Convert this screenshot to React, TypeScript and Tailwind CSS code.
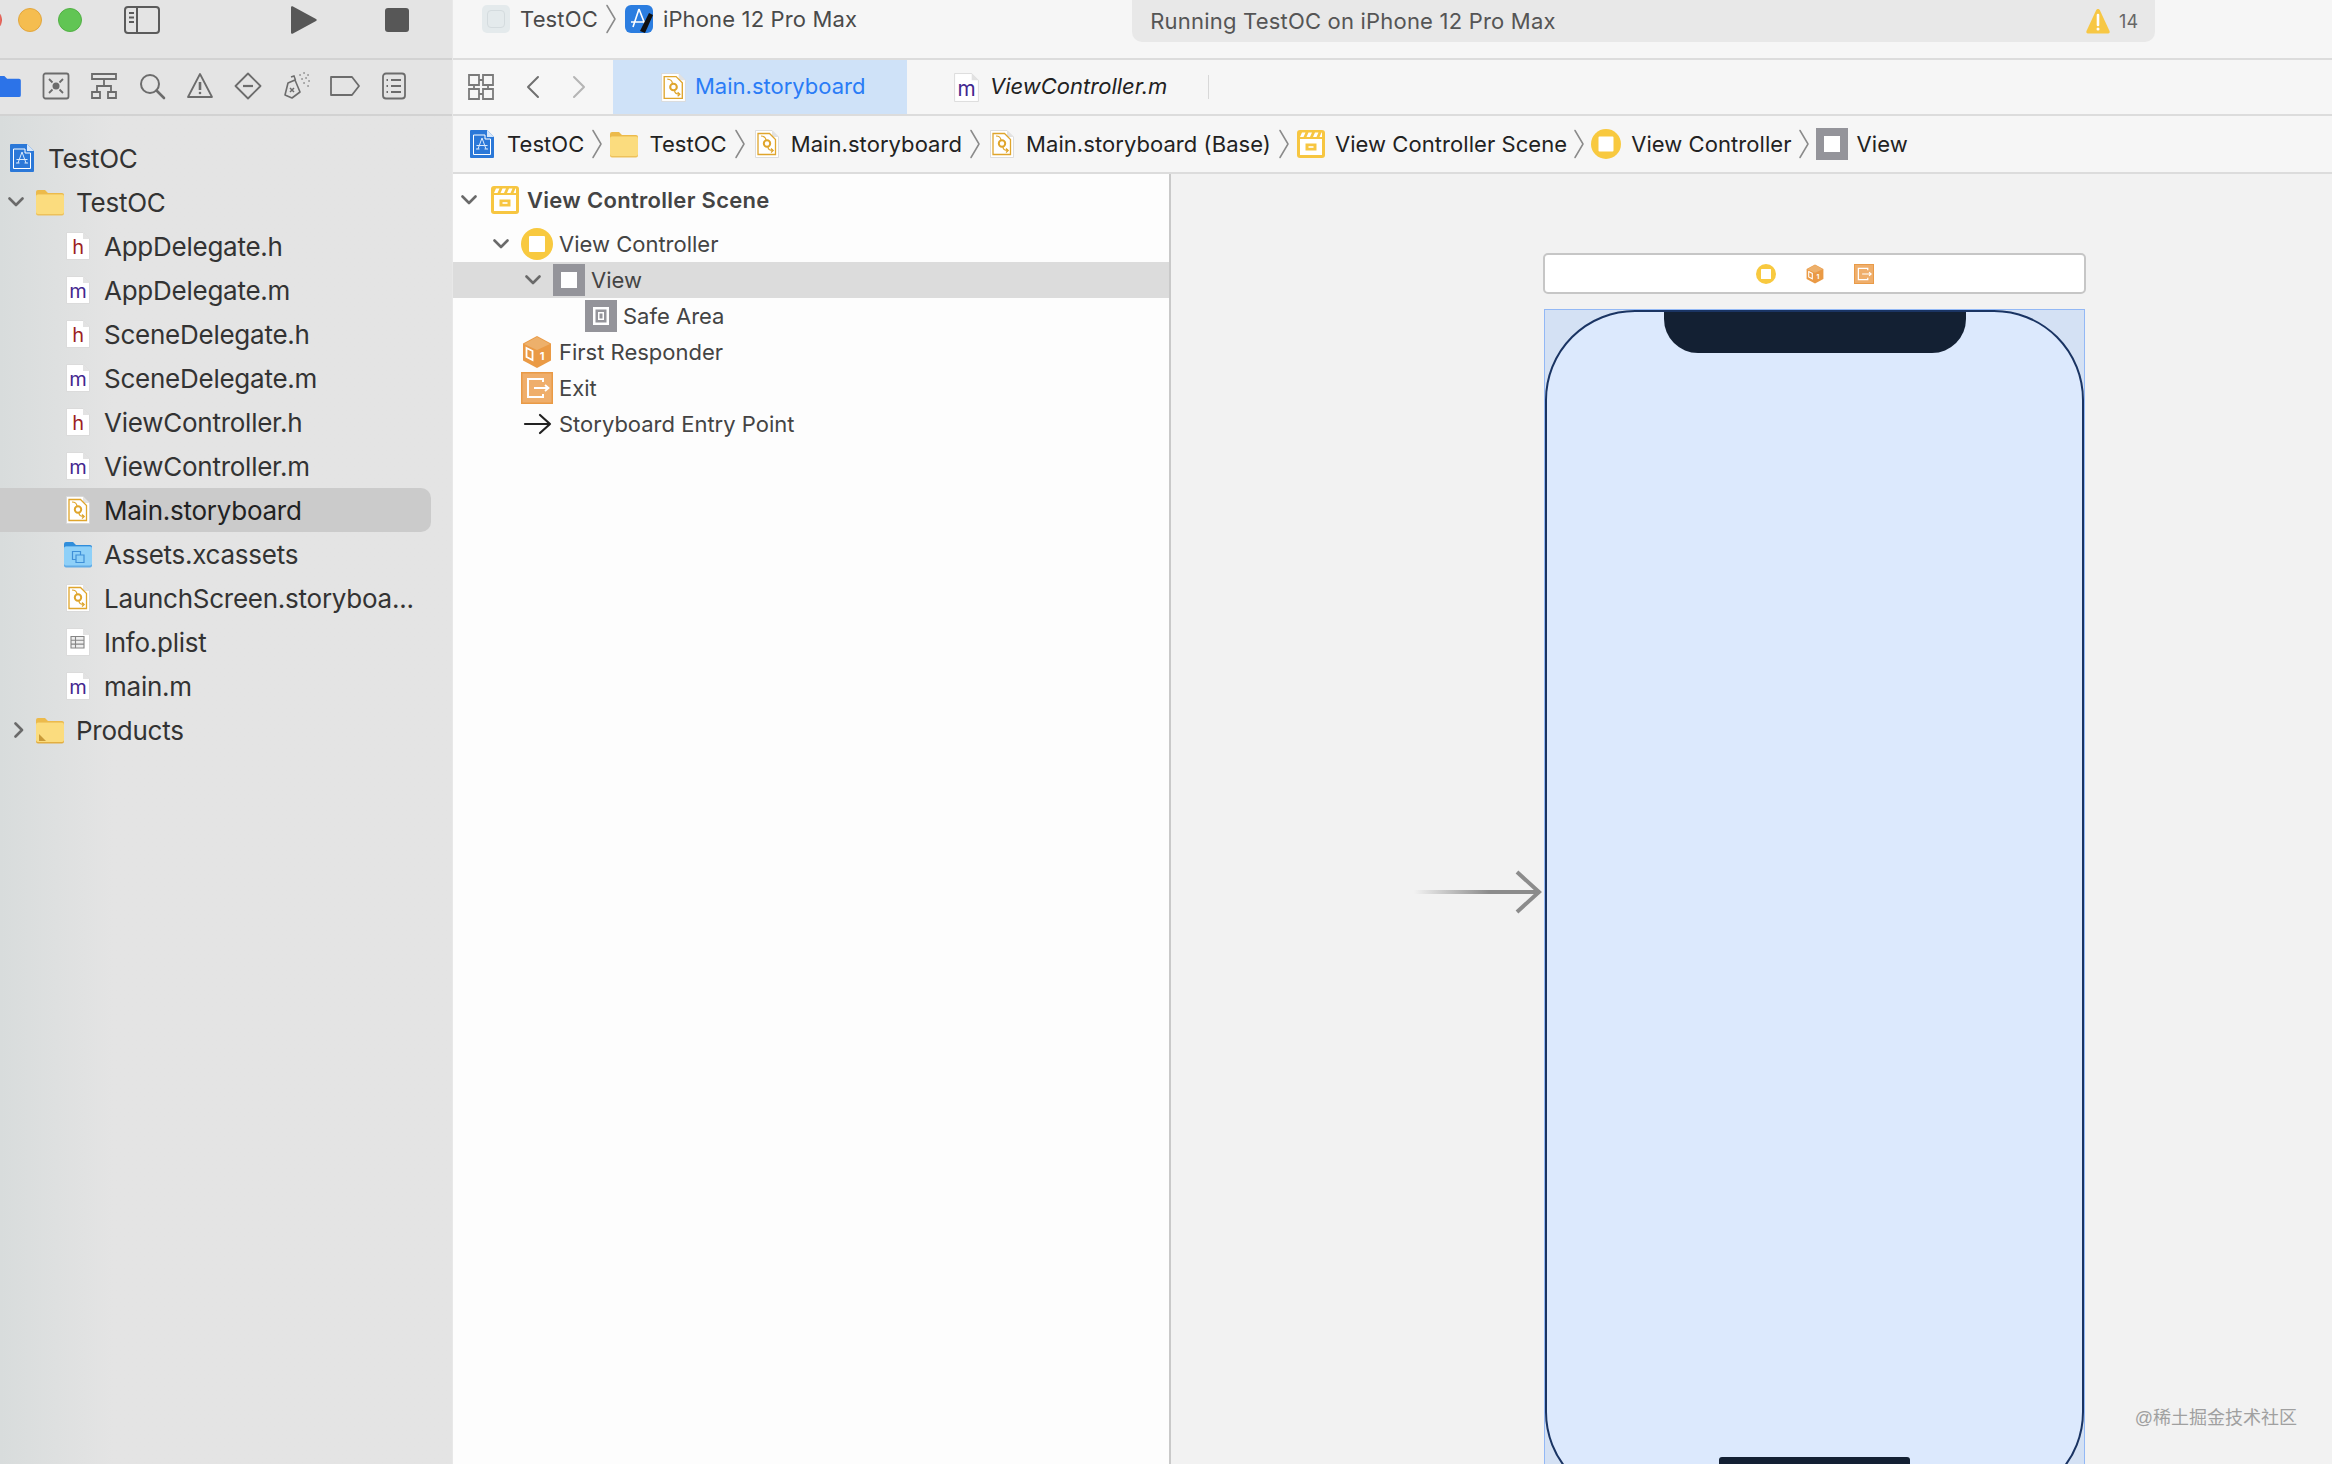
import type { ReactNode } from 'react'

type Cls = { className?: string }

function Chevron({ dir = 'down', className = '' }: { dir?: 'down' | 'right' } & Cls) {
  return (
    <svg viewBox="0 0 16 16" className={className} fill="none" stroke="#6a6a6a" strokeWidth="2.6" strokeLinecap="round" strokeLinejoin="round">
      {dir === 'down' ? <path d="M1.5 4.5 8 11l6.5-6.5" /> : <path d="M4.5 1.5 11 8l-6.5 6.5" />}
    </svg>
  )
}

function PathSep() {
  return (
    <svg viewBox="0 0 10 30" className="h-[30px] w-[10px] shrink-0" fill="none" stroke="#8a8a8a" strokeWidth="1.5" strokeLinecap="round" strokeLinejoin="round">
      <path d="M1 1.5 9 15 1 28.5" />
    </svg>
  )
}

function Page({ className = '', children }: Cls & { children?: ReactNode }) {
  return (
    <svg viewBox="0 0 24 28" className={className}>
      <path d="M.5.5H17L23.5 7v20.500H.5Z" fill="#fff" stroke="#d6d6d6" strokeWidth=".8" />
      <path d="M17 .5V7h6.500Z" fill="#e2e2e2" />
      {children}
    </svg>
  )
}

function CodeFile({ letter, className = 'h-[28px] w-[24px]' }: { letter: 'h' | 'm' } & Cls) {
  return (
    <Page className={className}>
      <text x="12" y="22" textAnchor="middle" fontFamily="Inter, sans-serif" fontSize="20" fill={letter === 'h' ? '#9c1f24' : '#43278f'}>
        {letter}
      </text>
    </Page>
  )
}

function StoryboardFile({ className = 'h-[28px] w-[24px]' }: Cls) {
  return (
    <Page className={className}>
      <path d="M3 3.500H14.500L20.500 9.500V24.500H3Z" fill="none" stroke="#dfa52c" strokeWidth="1.300" />
      <circle cx="12" cy="13.500" r="3.200" fill="none" stroke="#dfa52c" strokeWidth="2" />
      <path d="M6 6c3 0 5 2 5 4.500M13 17c0 2.500 1.500 3.500 5 3.500M16 18.500l2.200 2-2.200 2" fill="none" stroke="#dfa52c" strokeWidth="1.200" />
    </Page>
  )
}

function PlistFile() {
  return (
    <Page className="h-[28px] w-[24px]">
      <path d="M5 8.500H18V20H5ZM5 12.300H18M5 16.100H18M9.500 8.500V20" fill="#eee" stroke="#858585" strokeWidth="1.100" />
    </Page>
  )
}

function Folder({ className = 'h-[27px] w-[28px]' }: Cls) {
  return (
    <svg viewBox="0 0 28 27" className={className}>
      <path d="M0 3a2 2 0 0 1 2-2h7l3 3h14a2 2 0 0 1 2 2v6H0Z" fill="#ecba4b" />
      <rect y="5.500" width="28" height="21" rx="2" fill="#edc15b" />
      <rect y="5.500" width="28" height="19.500" rx="2" fill="#fbdc7e" />
    </svg>
  )
}

function ProductsFolder() {
  return (
    <svg viewBox="0 0 28 27" className="h-[27px] w-[28px]">
      <path d="M0 3a2 2 0 0 1 2-2h7l3 3h14a2 2 0 0 1 2 2v6H0Z" fill="#ecba4b" />
      <rect y="5.500" width="28" height="21" rx="2" fill="#e2ae42" />
      <rect y="5.500" width="28" height="19.500" rx="2" fill="#fbdc7e" />
      <path d="M3 17l7 7H3Z" fill="#c99a38" />
    </svg>
  )
}

function AssetsFolder() {
  return (
    <svg viewBox="0 0 28 27" className="h-[27px] w-[28px]">
      <path d="M0 3a2 2 0 0 1 2-2h7l3 3h14a2 2 0 0 1 2 2v6H0Z" fill="#2f8ddb" />
      <rect y="5.500" width="28" height="21" rx="2" fill="#62ace6" />
      <rect y="5.500" width="28" height="19" rx="2" fill="#8ed0f8" />
      <path d="M8.500 10.500h8v8h-8Z" fill="none" stroke="#3f90d8" strokeWidth="1.200" />
      <path d="M12 14h8v7.500h-8Z" fill="#8ed0f8" stroke="#3f90d8" strokeWidth="1.200" />
    </svg>
  )
}

function ProjectFile({ className = 'h-[28px] w-[24px]' }: Cls) {
  return (
    <svg viewBox="0 0 24 28" className={className}>
      <path d="M0 1a1 1 0 0 1 1-1h16l7 7v20a1 1 0 0 1-1 1H1a1 1 0 0 1-1-1Z" fill="#2b78d8" />
      <path d="M17 0v7h7Z" fill="#d5e6fa" />
      <path d="M3.500 5H15v4h5.500v15.500h-17Z" fill="none" stroke="#fff" strokeWidth="1" />
      <path d="M12 8 8 19M12 8l4 11M6.500 15.500h11M6 19h3.500M14.500 19H18" fill="none" stroke="#dbeafc" strokeWidth="1" />
    </svg>
  )
}

function SceneIcon({ className = 'h-[28px] w-[28px]' }: Cls) {
  return (
    <svg viewBox="0 0 28 28" className={className}>
      <rect width="28" height="28" rx="3" fill="#f7c641" />
      <path d="M3 9h22v16H3Z" fill="#fff" />
      <path d="M3 7 5 2.500h3.500L6.500 7ZM9.500 7l2-4.500H15L13 7ZM16 7l2-4.500h3.500L19.500 7ZM22.500 7l2-4.500H25V7Z" fill="#fff" />
      <path d="M8.500 13.500h11v7h-11Z" fill="#f7c641" />
      <path d="M11.500 16.200h5v1.600h-5Z" fill="#fff" />
    </svg>
  )
}

function VcIcon({ className = 'h-[32px] w-[32px]' }: Cls) {
  return (
    <svg viewBox="0 0 32 32" className={className}>
      <circle cx="16" cy="16" r="16" fill="#f8c93f" />
      <rect x="8" y="8" width="16" height="16" rx="1" fill="#fff" />
    </svg>
  )
}

function ViewIcon({ className = 'h-[32px] w-[32px]' }: Cls) {
  return (
    <svg viewBox="0 0 32 32" className={className}>
      <rect width="32" height="32" fill="#94949a" />
      <rect x="8" y="8" width="16" height="16" fill="#fff" />
    </svg>
  )
}

function SafeAreaIcon() {
  return (
    <svg viewBox="0 0 32 32" className="h-[32px] w-[32px]">
      <rect width="32" height="32" fill="#94949a" />
      <rect x="8" y="7" width="16" height="18" fill="#fff" />
      <rect x="10.500" y="9.500" width="11" height="13" fill="#94949a" />
      <rect x="13" y="12" width="6" height="8" fill="#fff" />
      <rect x="14.500" y="13.500" width="3" height="5" fill="#94949a" />
    </svg>
  )
}

function CubeIcon({ className = 'h-[32px] w-[30px]' }: Cls) {
  return (
    <svg viewBox="0 0 30 32" className={className}>
      <path d="M15 0 29 7.500V24.500L15 32 1 24.500V7.500Z" fill="#ea9a45" />
      <path d="M15 1 28 8 15 14 2 8Z" fill="#edb06b" />
      <path d="M4.500 12l6 3v9l-6-3Z" fill="none" stroke="#fff" strokeWidth="1.800" />
      <text x="20" y="24" textAnchor="middle" fontFamily="Inter, sans-serif" fontWeight="700" fontSize="11" fill="#fff">
        1
      </text>
    </svg>
  )
}

function ExitIcon({ className = 'h-[32px] w-[32px]' }: Cls) {
  return (
    <svg viewBox="0 0 32 32" className={className}>
      <rect width="32" height="32" fill="#e99a46" />
      <rect x="1.500" y="1.500" width="29" height="29" fill="#efae6b" />
      <path d="M22 10V7H7v18h15v-3" fill="none" stroke="#fff" strokeWidth="2" />
      <path d="M13 16h14M24 13l3.500 3-3.500 3" fill="none" stroke="#fff" strokeWidth="1.800" />
    </svg>
  )
}

function NavIcons() {
  const common = { className: 'h-[28px] w-[28px]', viewBox: '0 0 28 28', fill: 'none', stroke: '#6c6c6c', strokeWidth: 1.8 }
  return (
    <>
      <svg {...common}>
        <rect x="1.500" y="1.500" width="25" height="25" rx="2" />
        <circle cx="14" cy="14" r="3.500" fill="#6c6c6c" stroke="none" />
        <path d="M7 7l3.500 3.500M21 7l-3.500 3.500M7 21l3.500-3.500M21 21l-3.500-3.500" />
      </svg>
      <svg {...common}>
        <path d="M2 2h24v5H2ZM14 7v7M7 20v-6h14v6M2 20h8v6H2ZM18 20h8v6h-8Z" />
      </svg>
      <svg {...common}>
        <circle cx="12" cy="12" r="9" strokeWidth="2" />
        <path d="M18.500 18.500 26 26" strokeWidth="2.600" strokeLinecap="round" />
      </svg>
      <svg {...common}>
        <path d="M14 2 26 25H2Z" strokeLinejoin="round" />
        <path d="M14 10v8" strokeWidth="2.600" />
        <circle cx="14" cy="21" r="1.300" fill="#6c6c6c" stroke="none" />
      </svg>
      <svg {...common}>
        <path d="M14 1.500 26.500 14 14 26.500 1.500 14Z" strokeLinejoin="round" />
        <path d="M9 14h10" strokeWidth="2.200" />
      </svg>
      <svg {...common}>
        <path d="M6 11l7-3 5 12-8 6-7-3Z" strokeWidth="1.600" strokeLinejoin="round" />
        <path d="M9 5l3-1 1.500 4M8 16l4 4M12 16l-4 4" strokeWidth="1.500" />
        <path d="M18 3h.1M22 1h.1M26 3h.1M20 7h.1M24 6h.1M27 9h.1M22 11h.1M26 14h.1" strokeWidth="1.600" strokeLinecap="round" />
      </svg>
      <svg className="h-[28px] w-[30px]" viewBox="0 0 30 28" fill="none" stroke="#6c6c6c" strokeWidth="1.800">
        <path d="M1 5h21l7 9-7 9H1Z" strokeLinejoin="round" />
      </svg>
      <svg {...common}>
        <rect x="3" y="1.500" width="22" height="25" rx="3" />
        <path d="M11 8h10M11 14h10M11 20h10M6.500 8h1.500M6.500 14h1.500M6.500 20h1.500" />
      </svg>
    </>
  )
}

const fileRows = [
  { name: 'AppDelegate.h', icon: <CodeFile letter="h" /> },
  { name: 'AppDelegate.m', icon: <CodeFile letter="m" /> },
  { name: 'SceneDelegate.h', icon: <CodeFile letter="h" /> },
  { name: 'SceneDelegate.m', icon: <CodeFile letter="m" /> },
  { name: 'ViewController.h', icon: <CodeFile letter="h" /> },
  { name: 'ViewController.m', icon: <CodeFile letter="m" /> },
  { name: 'Main.storyboard', icon: <StoryboardFile />, selected: true },
  { name: 'Assets.xcassets', icon: <AssetsFolder /> },
  { name: 'LaunchScreen.storyboa...', icon: <StoryboardFile /> },
  { name: 'Info.plist', icon: <PlistFile /> },
  { name: 'main.m', icon: <CodeFile letter="m" /> },
]

function Sidebar() {
  return (
    <aside className="flex h-full w-[452px] shrink-0 flex-col overflow-hidden bg-[#e4e4e4] text-[#333]">
      <div className="flex h-[58px] shrink-0 items-start">
        <div className="flex h-[40px] items-center">
          <div className="-ml-[22px] flex items-center gap-[16px]">
            <span className="h-[24px] w-[24px] rounded-full border border-[#dd5a50] bg-[#ee6a5f]" />
            <span className="h-[24px] w-[24px] rounded-full border border-[#e2a63e] bg-[#f5bd4f]" />
            <span className="h-[24px] w-[24px] rounded-full border border-[#52b044] bg-[#61c554]" />
          </div>
          <svg viewBox="0 0 36 28" className="ml-[42px] h-[28px] w-[36px]" fill="none" stroke="#5b5b5b" strokeWidth="2">
            <rect x="1" y="1" width="34" height="26" rx="3" />
            <path d="M13 1v26" />
            <path d="M5 7h5M5 11.500h5M5 16h5" strokeWidth="2.200" />
          </svg>
          <svg viewBox="0 0 26 28" className="ml-[131px] h-[28px] w-[26px]">
            <path d="M0 1.500C0 .3 1 -.2 2 .4L25 13c1 .6 1 1.500 0 2L2 27.600c-1 .6-2 .1-2-1.100Z" fill="#575757" />
          </svg>
          <span className="ml-[68px] h-[24px] w-[24px] rounded-[3px] bg-[#575757]" />
        </div>
      </div>
      <div className="h-[2px] shrink-0 bg-[#d2d2d2]" />
      <div className="flex h-[54px] shrink-0 items-center pb-[2px]">
        <div className="-ml-[16px] flex w-[48px] shrink-0 justify-center">
          <svg viewBox="0 0 28 24" className="h-[22px] w-[26px]">
            <path d="M0 3a2 2 0 0 1 2-2h8l3 3h13a2 2 0 0 1 2 2v16a2 2 0 0 1-2 2H2a2 2 0 0 1-2-2Z" fill="#2c73e8" />
          </svg>
        </div>
        <div className="flex items-center [&>svg]:mx-[10px]">
          <NavIcons />
        </div>
      </div>
      <div className="h-[2px] shrink-0 bg-[#d2d2d2]" />
      <div className="flex-1 bg-linear-to-r from-[#d8dcdc] to-[#e4e4e4] to-[25%] pt-[20px] font-[Inter,sans-serif] text-[26px] tracking-[-0.25px]">
        <div className="flex h-[44px] items-center gap-[14px] pl-[10px]">
          <ProjectFile />
          <span>TestOC</span>
        </div>
        <div className="flex h-[44px] items-center pl-[8px]">
          <span className="w-[28px]">
            <Chevron className="h-[16px] w-[16px]" />
          </span>
          <Folder />
          <span className="ml-[12px]">TestOC</span>
        </div>
        {fileRows.map((row) => (
          <div
            key={row.name}
            className={`flex h-[44px] w-[431px] items-center rounded-r-[10px] ${row.selected ? 'bg-[#cbcbcb] text-[#222]' : ''}`}
          >
            <span className="ml-[64px] flex w-[28px] justify-center">{row.icon}</span>
            <span className="ml-[12px] whitespace-nowrap">{row.name}</span>
          </div>
        ))}
        <div className="flex h-[44px] items-center pl-[8px]">
          <span className="w-[28px] pl-[3px]">
            <Chevron dir="right" className="h-[16px] w-[16px]" />
          </span>
          <ProductsFolder />
          <span className="ml-[12px]">Products</span>
        </div>
      </div>
    </aside>
  )
}

function TopBar() {
  return (
    <div className="flex h-[58px] shrink-0 items-start bg-[#f6f6f6] pl-[29px] text-[22px] tracking-[0.15px] text-[#4a4a4a]">
      <div className="flex h-[38px] items-center">
        <span className="flex h-[28px] w-[28px] items-center justify-center rounded-[5px] bg-[#e4eaec]">
          <span className="h-[18px] w-[18px] rounded-[4px] border border-[#d4dbde]" />
        </span>
        <span className="ml-[10px]">TestOC</span>
        <span className="ml-[8px]">
          <PathSep />
        </span>
        <svg viewBox="0 0 30 30" className="ml-[9px] h-[30px] w-[30px]">
          <rect width="28" height="28" y="1" rx="6" fill="#2b7de0" />
          <path d="M14 5 8 23M14 5l7 18M6 18h17" fill="none" stroke="#fff" strokeWidth="1.600" />
          <path d="M24 9 28 11 20 29 15 27Z" fill="#111" />
        </svg>
        <span className="ml-[8px]">iPhone 12 Pro Max</span>
      </div>
      <div className="ml-[275px] flex h-[42px] w-[1023px] items-center justify-between rounded-b-[10px] bg-[#e8e8e8] pr-[17px] pl-[18px]">
        <span className="tracking-[0.2px] text-[#555]">Running TestOC on iPhone 12 Pro Max</span>
        <span className="flex items-center gap-[9px] text-[18px] text-[#666]">
          <svg viewBox="0 0 24 26" className="h-[26px] w-[24px]">
            <path d="M12 1c1 0 1.500.5 2 1.500L23.500 23c.5 1.500 0 2.500-1.500 2.500H2C.5 25.500 0 24.500.5 23L10 2.500C10.500 1.500 11 1 12 1Z" fill="#f7c744" />
            <path d="M12 7v10" stroke="#fff" strokeWidth="2.600" strokeLinecap="round" />
            <circle cx="12" cy="21" r="1.500" fill="#fff" />
          </svg>
          14
        </span>
      </div>
    </div>
  )
}

function TabBar() {
  return (
    <div className="flex h-[54px] shrink-0 items-center bg-[#f6f6f6] text-[22px]">
      <svg viewBox="0 0 26 26" className="ml-[15px] h-[26px] w-[26px]" fill="none" stroke="#7a7a7a" strokeWidth="1.800">
        <path d="M1 1h10v10H1ZM15 1h10v10H15ZM1 15h10v10H1ZM15 15h10v10H15ZM11 6h4M20 11v4M6 11v4M11 20h4" />
      </svg>
      <svg viewBox="0 0 14 24" className="ml-[32px] h-[24px] w-[14px]" fill="none" stroke="#707070" strokeWidth="2" strokeLinecap="round" strokeLinejoin="round">
        <path d="M12 2 2 12l10 10" />
      </svg>
      <svg viewBox="0 0 14 24" className="ml-[32px] h-[24px] w-[14px]" fill="none" stroke="#b5b5b5" strokeWidth="2" strokeLinecap="round" strokeLinejoin="round">
        <path d="M2 2l10 10L2 22" />
      </svg>
      <div className="ml-[27px] flex h-full w-[294px] items-center bg-[#cfe2f8] pl-[48px] text-[#2a7cf6]">
        <StoryboardFile className="h-[29px] w-[25px]" />
        <span className="ml-[9px] pb-[1px]">Main.storyboard</span>
      </div>
      <CodeFile letter="m" className="ml-[47px] h-[29px] w-[25px]" />
      <span className="ml-[11px] pb-[1px] text-[#222] italic">ViewController.m</span>
      <span className="ml-[41px] h-[24px] w-[1px] bg-[#d8d8d8]" />
    </div>
  )
}

function PathBar() {
  return (
    <div className="flex h-[56px] shrink-0 items-center bg-[#f6f6f6] pl-[17px] text-[22px] tracking-[0.06px] text-[#222] [&>svg]:shrink-0">
      <ProjectFile />
      <span className="ml-[13px]">TestOC</span>
      <span className="mx-[8px]">
        <PathSep />
      </span>
      <Folder />
      <span className="ml-[11px]">TestOC</span>
      <span className="mx-[8px]">
        <PathSep />
      </span>
      <StoryboardFile className="ml-[2px] h-[28px] w-[24px]" />
      <span className="ml-[12px]">Main.storyboard</span>
      <span className="mx-[8px]">
        <PathSep />
      </span>
      <StoryboardFile className="ml-[2px] h-[28px] w-[24px]" />
      <span className="ml-[12px]">Main.storyboard (Base)</span>
      <span className="mx-[8px]">
        <PathSep />
      </span>
      <SceneIcon />
      <span className="ml-[10px]">View Controller Scene</span>
      <span className="mx-[7px]">
        <PathSep />
      </span>
      <VcIcon className="h-[32px] w-[30px]" />
      <span className="ml-[10px]">View Controller</span>
      <span className="mx-[7px]">
        <PathSep />
      </span>
      <ViewIcon />
      <span className="ml-[9px]">View</span>
    </div>
  )
}

function Outline() {
  return (
    <div className="h-full w-[716px] shrink-0 overflow-hidden bg-[#fdfdfd] pt-[4px] font-[Inter,sans-serif] text-[22px] text-[#444]">
      <div className="mb-[4px] flex h-[44px] items-center pl-[8px] font-semibold tracking-[0.3px]">
        <span className="w-[30px]">
          <Chevron className="h-[16px] w-[16px]" />
        </span>
        <SceneIcon />
        <span className="ml-[8px]">View Controller Scene</span>
      </div>
      <div className="flex h-[36px] items-center pl-[40px]">
        <span className="w-[28px]">
          <Chevron className="h-[16px] w-[16px]" />
        </span>
        <VcIcon />
        <span className="ml-[6px]">View Controller</span>
      </div>
      <div className="flex h-[36px] items-center bg-[#dcdcdc] pl-[72px]">
        <span className="w-[28px]">
          <Chevron className="h-[16px] w-[16px]" />
        </span>
        <ViewIcon />
        <span className="ml-[6px]">View</span>
      </div>
      <div className="flex h-[36px] items-center pl-[132px]">
        <SafeAreaIcon />
        <span className="ml-[6px]">Safe Area</span>
      </div>
      <div className="flex h-[36px] items-center pl-[68px]">
        <span className="flex w-[32px] justify-center">
          <CubeIcon />
        </span>
        <span className="ml-[6px]">First Responder</span>
      </div>
      <div className="flex h-[36px] items-center pl-[68px]">
        <ExitIcon />
        <span className="ml-[6px]">Exit</span>
      </div>
      <div className="flex h-[36px] items-center pl-[68px]">
        <svg viewBox="0 0 32 24" className="h-[24px] w-[32px]" fill="none" stroke="#222" strokeWidth="2.200" strokeLinecap="round" strokeLinejoin="round">
          <path d="M4 12h25M19 3l10 9-10 9" />
        </svg>
        <span className="ml-[6px]">Storyboard Entry Point</span>
      </div>
    </div>
  )
}

function Canvas() {
  return (
    <div className="relative h-full flex-1 overflow-hidden border-l-2 border-[#c9c9c9] bg-[#f2f2f2] pt-[79px] pl-[372px]">
      <div className="flex h-[41px] w-[543px] items-center justify-center gap-[30px] rounded-[5px] border-2 border-[#c6c6c6] bg-white">
        <VcIcon className="h-[20px] w-[20px]" />
        <CubeIcon className="h-[20px] w-[18px]" />
        <ExitIcon className="h-[20px] w-[20px]" />
      </div>
      <div className="mt-[15px] ml-px h-[1194px] w-[541px] border border-[#93b8f5] bg-[#d4e1f4]">
        <div className="relative h-full rounded-[90px] border-2 border-[#1a3463] bg-[#dce9fd]">
          <div className="mx-auto h-[41px] w-[302px] rounded-b-[34px] bg-[#132033]" />
          <div className="absolute bottom-[33px] left-[172px] h-[10px] w-[191px] rounded-t-[3px] bg-[#132033]" />
        </div>
      </div>
      <div className="absolute top-[696px] left-[243px] flex items-center">
        <svg viewBox="0 0 128 44" className="h-[44px] w-[128px]" fill="none">
          <defs>
            <linearGradient id="tail" x1="0" x2="1" y1="0" y2="0">
              <stop offset="0" stopColor="#8c8c8c" stopOpacity="0" />
              <stop offset="0.6" stopColor="#8c8c8c" />
            </linearGradient>
          </defs>
          <rect x="0" y="20" width="125" height="4" fill="url(#tail)" />
          <path d="M103 2 125 22 103 42" stroke="#8c8c8c" strokeWidth="4" />
        </svg>
      </div>
      <span className="absolute right-[35px] bottom-[32px] font-['Liberation_Sans','Noto_Sans_CJK_SC',sans-serif] text-[18px] whitespace-nowrap text-[#a0a0a0]">
        @稀土掘金技术社区
      </span>
    </div>
  )
}

export default function App() {
  return (
    <div className="flex h-[1464px] w-[2332px] overflow-hidden bg-[#f6f6f6] font-[Inter,sans-serif]">
      <Sidebar />
      <main className="flex h-full flex-1 flex-col overflow-hidden border-l border-[#e8e8e8]">
        <TopBar />
        <div className="h-[2px] shrink-0 bg-[#dcdcdc]" />
        <TabBar />
        <div className="h-[2px] shrink-0 bg-[#dcdcdc]" />
        <PathBar />
        <div className="h-[2px] shrink-0 bg-[#dcdcdc]" />
        <div className="flex min-h-0 flex-1">
          <Outline />
          <Canvas />
        </div>
      </main>
    </div>
  )
}
